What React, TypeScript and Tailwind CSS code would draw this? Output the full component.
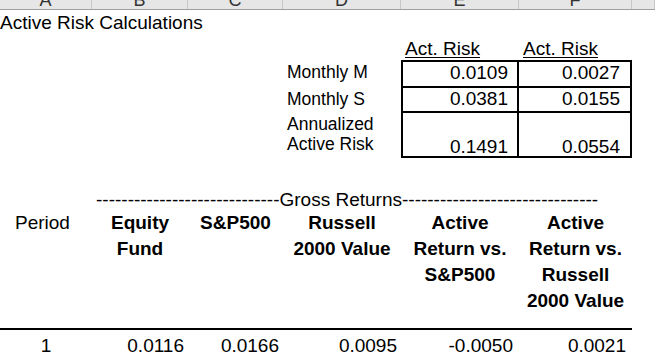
import { FC } from "react";

const cols = "grid grid-cols-[92px_96px_95px_118px_118px_113px_1fr]";

const letters = ["A", "B", "C", "D", "E", "F", ""];

const dataRow = ["0.0116", "0.0166", "0.0095", "-0.0050", "0.0021"];

const App: FC = () => {
  return (
    <div className="w-[655px] h-[357px] overflow-hidden bg-white text-black font-['Liberation_Sans',Arial,sans-serif] text-[19px] leading-[19px]">
      {/* column letters strip, scrolled so only the bottoms show */}
      <div className={`${cols} h-[10px] overflow-hidden bg-[#e6e6e6] border-b border-[#9f9f9f]`}>
        {letters.map((l, i) => (
          <div key={i} className="flex justify-center items-end overflow-hidden border-r border-[#c6c6c6]">
            <span className="text-[18px] leading-[18px] text-[#333]">{l}</span>
          </div>
        ))}
      </div>

      {/* title */}
      <div className="h-[25px] flex items-end pb-[3px]">
        <span className="whitespace-nowrap">Active Risk Calculations</span>
      </div>

      {/* act. risk headings */}
      <div className={`${cols} h-[25px]`}>
        <div className="col-span-4" />
        <div className="flex items-end pb-[2px] pl-[4px]">
          <span className="underline underline-offset-2">Act. Risk</span>
        </div>
        <div className="flex items-end pb-[2px] pl-[4px]">
          <span className="underline underline-offset-2">Act. Risk</span>
        </div>
      </div>

      {/* monthly M */}
      <div className={`${cols} h-[26px]`}>
        <div className="col-span-3" />
        <div className="flex items-end pb-[4px] pl-[4px] text-[17.5px] leading-[20px]">Monthly M</div>
        <div className="flex items-end justify-end pb-[4px] pr-[9px] border-t-2 border-l-2 border-r-2 border-black">0.0109</div>
        <div className="flex items-end justify-end pb-[4px] pr-[10px] border-t-2 border-r-2 border-black">0.0027</div>
      </div>

      {/* monthly S */}
      <div className={`${cols} h-[25px]`}>
        <div className="col-span-3" />
        <div className="flex items-end pb-[2px] pl-[4px] text-[17.5px] leading-[20px]">Monthly S</div>
        <div className="flex items-end justify-end pb-[3px] pr-[9px] border-t-2 border-l-2 border-r-2 border-black">0.0381</div>
        <div className="flex items-end justify-end pb-[3px] pr-[10px] border-t-2 border-r-2 border-black">0.0155</div>
      </div>

      {/* annualized */}
      <div className={`${cols} h-[47px]`}>
        <div className="col-span-3" />
        <div className="flex items-end pb-[4px] pl-[4px] text-[17.5px] leading-[20px]">
          Annualized
          <br />
          Active Risk
        </div>
        <div className="flex items-end justify-end pr-[9px] border-t-2 border-b-2 border-l-2 border-r-2 border-black">0.1491</div>
        <div className="flex items-end justify-end pr-[10px] border-t-2 border-b-2 border-r-2 border-black">0.0554</div>
      </div>

      <div className="h-[25px]" />

      {/* gross returns banner */}
      <div className={`${cols} h-[27px]`}>
        <div />
        <div className="col-span-5 flex items-end pb-[1px] pl-[4px] whitespace-nowrap">
          {"-".repeat(29)}Gross Returns{"-".repeat(31)}
        </div>
      </div>

      {/* column headings */}
      <div className={`${cols} h-[120px] leading-[26px]`}>
        <div className="pl-[15px] border-b-2 border-black">Period</div>
        <div className="text-center font-bold border-b-2 border-black">
          Equity
          <br />
          Fund
        </div>
        <div className="text-center font-bold border-b-2 border-black">S&amp;P500</div>
        <div className="text-center font-bold border-b-2 border-black">
          Russell
          <br />
          2000 Value
        </div>
        <div className="text-center font-bold border-b-2 border-black">
          Active
          <br />
          Return vs.
          <br />
          S&amp;P500
        </div>
        <div className="text-center font-bold border-b-2 border-black">
          Active
          <br />
          Return vs.
          <br />
          Russell
          <br />
          2000 Value
        </div>
      </div>

      {/* first data row */}
      <div className={`${cols} h-[27px]`}>
        <div className="flex items-end justify-center pb-[2px]">1</div>
        {dataRow.map((v, i) => (
          <div key={i} className={`flex items-end justify-end pb-[2px] ${i < 3 ? "pr-[4px]" : "pr-[6px]"}`}>
            {v}
          </div>
        ))}
      </div>
    </div>
  );
};

export default App;
